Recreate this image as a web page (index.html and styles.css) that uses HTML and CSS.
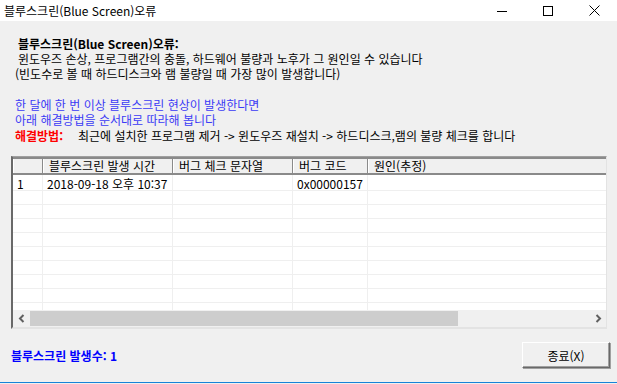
FILE: index.html
```html
<!DOCTYPE html>
<html lang="ko">
<head>
    <meta charset="UTF-8">
    <title>블루스크린(Blue Screen)오류</title>
    <link rel="stylesheet" href="styles.css">
</head>
<body>

<div class="window">
    <div class="titlebar">
        <span class="title">블루스크린(Blue Screen)오류</span>
        <div class="controls">
            <span class="ctl">
                <svg width="10" height="10" viewBox="0 0 10 10"><path d="M0 5.5H10" stroke="#000" stroke-width="1"/></svg>
            </span>
            <span class="ctl">
                <svg width="10" height="10" viewBox="0 0 10 10"><rect x="0.5" y="0.5" width="9" height="9" fill="none" stroke="#000" stroke-width="1"/></svg>
            </span>
            <span class="ctl">
                <svg width="11" height="11" viewBox="0 0 11 11"><path d="M0.5 0.5L10.5 10.5M10.5 0.5L0.5 10.5" stroke="#000" stroke-width="1"/></svg>
            </span>
        </div>
    </div>

    <div class="content">
        <div class="intro">
            <p class="bold indent">블루스크린(Blue Screen)오류:</p>
            <p class="indent">윈도우즈 손상, 프로그램간의 충돌, 하드웨어 불량과 노후가 그 원인일 수 있습니다</p>
            <p>(빈도수로 볼 때 하드디스크와 램 불량일 때 가장 많이 발생합니다)</p>
            <p class="blue gap">한 달에 한 번 이상 블루스크린 현상이 발생한다면</p>
            <p class="blue">아래 해결방법을 순서대로 따라해 봅니다</p>
            <p class="solution"><span class="red">해결방법:</span><span>최근에 설치한 프로그램 제거 -&gt; 윈도우즈 재설치 -&gt; 하드디스크,램의 불량 체크를 합니다</span></p>
        </div>

        <div class="listview">
            <div class="lv-head">
                <div class="c0"></div>
                <div class="c1">블루스크린 발생 시간</div>
                <div class="c2">버그 체크 문자열</div>
                <div class="c3">버그 코드</div>
                <div class="c4">원인(추정)</div>
            </div>
            <div class="lv-body">
                <div class="lv-row first">
                    <div class="c0">1</div>
                    <div class="c1">2018-09-18 오후 10:37</div>
                    <div class="c2"></div>
                    <div class="c3">0x00000157</div>
                    <div class="c4"></div>
                </div>
                <div class="lv-row"><div class="c0"></div><div class="c1"></div><div class="c2"></div><div class="c3"></div><div class="c4"></div></div>
                <div class="lv-row"><div class="c0"></div><div class="c1"></div><div class="c2"></div><div class="c3"></div><div class="c4"></div></div>
                <div class="lv-row"><div class="c0"></div><div class="c1"></div><div class="c2"></div><div class="c3"></div><div class="c4"></div></div>
                <div class="lv-row"><div class="c0"></div><div class="c1"></div><div class="c2"></div><div class="c3"></div><div class="c4"></div></div>
                <div class="lv-row"><div class="c0"></div><div class="c1"></div><div class="c2"></div><div class="c3"></div><div class="c4"></div></div>
                <div class="lv-row"><div class="c0"></div><div class="c1"></div><div class="c2"></div><div class="c3"></div><div class="c4"></div></div>
                <div class="lv-row"><div class="c0"></div><div class="c1"></div><div class="c2"></div><div class="c3"></div><div class="c4"></div></div>
                <div class="lv-row"><div class="c0"></div><div class="c1"></div><div class="c2"></div><div class="c3"></div><div class="c4"></div></div>
                <div class="lv-row"><div class="c0"></div><div class="c1"></div><div class="c2"></div><div class="c3"></div><div class="c4"></div></div>
            </div>
            <div class="hscroll">
                <span class="arrow">
                    <svg width="8" height="9" viewBox="0 0 8 9"><path d="M5.5 1L2 4.5L5.5 8" fill="none" stroke="#606060" stroke-width="2"/></svg>
                </span>
                <div class="track"><div class="thumb"></div></div>
                <span class="arrow">
                    <svg width="8" height="9" viewBox="0 0 8 9"><path d="M2.5 1L6 4.5L2.5 8" fill="none" stroke="#606060" stroke-width="2"/></svg>
                </span>
            </div>
        </div>

        <div class="footer">
            <span class="count">블루스크린 발생수: 1</span>
            <button class="close-btn">종료(X)</button>
        </div>
    </div>
</div>

</body>
</html>
```

FILE: styles.css
```css
* {
    margin: 0;
    padding: 0;
    box-sizing: border-box;
}

body {
    width: 617px;
    height: 384px;
    overflow: hidden;
    background: #f0f0f0;
    font-family: "Noto Sans CJK KR", "Noto Sans", sans-serif;
    font-size: 12px;
    color: #000;
}

.window {
    height: 383px;
    border-bottom: 1px solid #1883d7;
    display: flex;
    flex-direction: column;
}

.titlebar {
    height: 21px;
    background: #fff;
    display: flex;
    align-items: center;
    justify-content: space-between;
    padding-left: 4px;
}

.title {
    font-size: 12px;
    line-height: 16px;
}

.controls {
    display: flex;
    height: 100%;
}

.ctl {
    width: 46px;
    display: flex;
    align-items: center;
    justify-content: center;
}

.content {
    flex: 1;
    padding: 15px 10px 0 11px;
    display: flex;
    flex-direction: column;
}

.intro p {
    line-height: 15px;
    white-space: nowrap;
    padding-left: 4px;
}

.intro .indent {
    padding-left: 7px;
}

.bold {
    font-weight: bold;
}

.blue {
    color: #3b3bf5;
}

.gap {
    margin-top: 16px;
}

.solution {
    display: flex;
    margin-top: 1px;
}

.red {
    color: #ff0000;
    font-weight: bold;
    width: 63px;
}

.listview {
    margin-top: 13px;
    width: 596px;
    height: 173px;
    background: #fff;
    border-top: 1px solid #a0a0a0;
    border-left: 2px solid #696969;
    border-right: 1px solid #e3e3e3;
    border-bottom: 2px solid #e3e3e3;
    display: flex;
    flex-direction: column;
}

.lv-head {
    display: flex;
    height: 18px;
    background: #f0f0f0;
    border-top: 2px solid #8a8a8a;
    border-bottom: 2px solid #8a8a8a;
    line-height: 14px;
}

.lv-head > div {
    border-right: 1px solid #8a8a8a;
    box-shadow: inset 1px 0 0 #fff;
    padding-left: 6px;
    white-space: nowrap;
}

.c0 { width: 30px; }
.c1 { width: 130px; }
.c2 { width: 120px; }
.c3 { width: 75px; }
.c4 { flex: 1; }

.lv-head .c4 { border-right: none; }

.lv-body {
    flex: 1;
    overflow: hidden;
}

.lv-row {
    display: flex;
    height: 14px;
    border-bottom: 1px solid #efefef;
    line-height: 14px;
}

.lv-row.first {
    height: 16px;
    line-height: 17px;
}

.lv-row > div {
    border-right: 1px solid #efefef;
    padding-left: 4px;
    white-space: nowrap;
}

.lv-row .c4 { border-right: none; }

.hscroll {
    height: 17px;
    display: flex;
    background: #f0f0f0;
}

.arrow {
    width: 17px;
    display: flex;
    align-items: center;
    justify-content: center;
}

.track {
    flex: 1;
    display: flex;
    padding: 1px 0;
}

.thumb {
    width: 428px;
    background: #cdcdcd;
}

.footer {
    flex: 1;
    display: flex;
    justify-content: space-between;
    align-items: flex-start;
    padding-top: 13px;
}

.count {
    color: #0000ff;
    font-weight: bold;
    margin-top: 7px;
    line-height: 14px;
}

.close-btn {
    width: 88px;
    height: 26px;
    margin-right: -3px;
    background: #f0f0f0;
    border: 1px solid #fff;
    border-right-color: #696969;
    border-bottom-color: #696969;
    box-shadow: 1px 1px 0 #a0a0a0, inset -1px -1px 0 #a0a0a0;
    font-family: "Noto Sans CJK KR", sans-serif;
    font-size: 12px;
    color: #000;
}
```
